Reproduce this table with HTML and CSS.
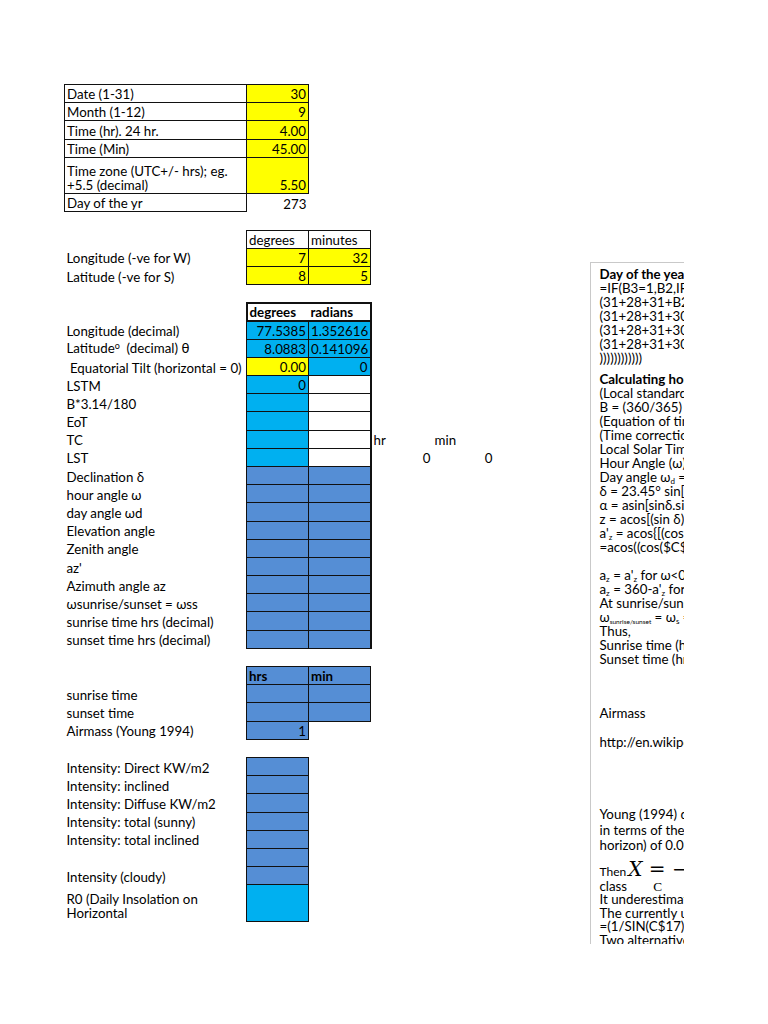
FILE: index.html
```html
<!DOCTYPE html>
<html lang="en">
<head>
<meta charset="utf-8">
<title>Solar calculator</title>
<link rel="stylesheet" href="styles.css">
</head>
<body>
<div class="page">
  <div class="sheet">
    <table class="grid">
      <colgroup><col class="ca"><col class="cn"><col class="cn"><col class="cn"><col class="cn"></colgroup>
      <tr><td class="bx">Date (1-31)</td><td class="bx y r">30</td><td></td><td></td><td></td></tr>
      <tr><td class="bx">Month (1-12)</td><td class="bx y r">9</td><td></td><td></td><td></td></tr>
      <tr><td class="bx">Time (hr). 24 hr.</td><td class="bx y r">4.00</td><td></td><td></td><td></td></tr>
      <tr><td class="bx">Time (Min)</td><td class="bx y r">45.00</td><td></td><td></td><td></td></tr>
      <tr class="tall"><td class="bx">Time zone (UTC+/- hrs); eg.<br>+5.5 (decimal)</td><td class="bx y r">5.50</td><td></td><td></td><td></td></tr>
      <tr><td class="bx">Day of the yr</td><td class="r">273</td><td></td><td></td><td></td></tr>
      <tr><td></td><td></td><td></td><td></td><td></td></tr>
      <tr><td></td><td class="bx">degrees</td><td class="bx">minutes</td><td></td><td></td></tr>
      <tr><td>Longitude (-ve for W)</td><td class="bx y r">7</td><td class="bx y r">32</td><td></td><td></td></tr>
      <tr><td>Latitude (-ve for S)</td><td class="bx y r">8</td><td class="bx y r">5</td><td></td><td></td></tr>
      <tr><td></td><td></td><td></td><td></td><td></td></tr>
      <tr><td></td><td class="hdl b">degrees</td><td class="hdr b">radians</td><td></td><td></td></tr>
      <tr><td>Longitude (decimal)</td><td class="bx lb r">77.5385</td><td class="bx lb r rr">1.352616</td><td></td><td></td></tr>
      <tr><td>Latitude<sup class="deg">o</sup>&nbsp; (decimal) <span class="theta">θ</span></td><td class="bx lb r">8.0883</td><td class="bx lb r rr">0.141096</td><td></td><td></td></tr>
      <tr><td>&nbsp;Equatorial Tilt (horizontal = 0)</td><td class="bx y r">0.00</td><td class="bx lb r rr">0</td><td></td><td></td></tr>
      <tr><td>LSTM</td><td class="bx lb r">0</td><td class="bx rr"></td><td></td><td></td></tr>
      <tr><td>B*3.14/180</td><td class="bx lb"></td><td class="bx rr"></td><td></td><td></td></tr>
      <tr><td>EoT</td><td class="bx lb"></td><td class="bx rr"></td><td></td><td></td></tr>
      <tr><td>TC</td><td class="bx lb"></td><td class="bx rr"></td><td>hr</td><td>min</td></tr>
      <tr><td>LST</td><td class="bx lb"></td><td class="bx rr"></td><td class="r">0</td><td class="r">0</td></tr>
      <tr><td>Declination δ</td><td class="bx mb"></td><td class="bx mb rr"></td><td></td><td></td></tr>
      <tr><td>hour angle ω</td><td class="bx mb"></td><td class="bx mb rr"></td><td></td><td></td></tr>
      <tr><td>day angle ωd</td><td class="bx mb"></td><td class="bx mb rr"></td><td></td><td></td></tr>
      <tr><td>Elevation angle</td><td class="bx mb"></td><td class="bx mb rr"></td><td></td><td></td></tr>
      <tr><td>Zenith angle</td><td class="bx mb"></td><td class="bx mb rr"></td><td></td><td></td></tr>
      <tr><td>az'</td><td class="bx mb"></td><td class="bx mb rr"></td><td></td><td></td></tr>
      <tr><td>Azimuth angle az</td><td class="bx mb"></td><td class="bx mb rr"></td><td></td><td></td></tr>
      <tr><td>ωsunrise/sunset = ωss</td><td class="bx mb"></td><td class="bx mb rr"></td><td></td><td></td></tr>
      <tr><td>sunrise time hrs (decimal)</td><td class="bx mb"></td><td class="bx mb rr"></td><td></td><td></td></tr>
      <tr><td>sunset time hrs (decimal)</td><td class="bx mb"></td><td class="bx mb rr"></td><td></td><td></td></tr>
      <tr><td></td><td></td><td></td><td></td><td></td></tr>
      <tr><td></td><td class="bx mb b">hrs</td><td class="bx mb b">min</td><td></td><td></td></tr>
      <tr><td>sunrise time</td><td class="bx mb"></td><td class="bx mb"></td><td></td><td></td></tr>
      <tr><td>sunset time</td><td class="bx mb"></td><td class="bx mb"></td><td></td><td></td></tr>
      <tr><td>Airmass (Young 1994)</td><td class="bx mb r">1</td><td></td><td></td><td></td></tr>
      <tr><td></td><td></td><td></td><td></td><td></td></tr>
      <tr><td>Intensity: Direct KW/m2</td><td class="bx mb"></td><td></td><td></td><td></td></tr>
      <tr><td>Intensity: inclined</td><td class="bx mb"></td><td></td><td></td><td></td></tr>
      <tr><td>Intensity: Diffuse KW/m2</td><td class="bx mb"></td><td></td><td></td><td></td></tr>
      <tr><td>Intensity: total (sunny)</td><td class="bx mb"></td><td></td><td></td><td></td></tr>
      <tr><td>Intensity: total inclined</td><td class="bx mb"></td><td></td><td></td><td></td></tr>
      <tr><td></td><td class="bx mb"></td><td></td><td></td><td></td></tr>
      <tr><td>Intensity (cloudy)</td><td class="bx mb"></td><td></td><td></td><td></td></tr>
      <tr class="tall"><td>R0 (Daily Insolation on<br>Horizontal</td><td class="bx lb"></td><td></td><td></td><td></td></tr>
    </table>
  </div>

  <div class="note">
    <div class="para">
      <div class="b">Day of the year</div>
      <div>=IF(B3=1,B2,IF(B3=2,31+B2,IF(B3=3,</div>
      <div>(31+28+31+B2),IF(B3=5,</div>
      <div>(31+28+31+30+B2),IF(B3=6,</div>
      <div>(31+28+31+30+31+B2),IF(B3=7,</div>
      <div>(31+28+31+30+31+30+B2),IF(B3=8,</div>
      <div>))))))))))))</div>
    </div>
    <div class="para p2">
      <div class="b">Calculating hour angle</div>
      <div>(Local standard time meridian) LSTM = 15&deg;.&Delta;T<sub>GMT</sub></div>
      <div>B = (360/365) (d - 81)</div>
      <div>(Equation of time) EoT = 9.87 sin(2B) - 7.53 cos(B) - 1.5 sin(B)</div>
      <div>(Time correction factor) TC = 4(Longitude - LSTM) + EoT</div>
      <div>Local Solar Time LST = LT + TC/60</div>
      <div>Hour Angle (&omega;) = 15&deg;(LST - 12)</div>
      <div>Day angle &omega;<sub>d</sub> = 2&pi;(d - 1)/365</div>
      <div>&delta; = 23.45&deg; sin[(360/365)(d - 81)]</div>
      <div>&alpha; = asin[sin&delta;.sin&phi; + cos&delta;.cos&phi;.cos&omega;]</div>
      <div>z = acos[(sin &delta;)(sin &phi;) + (cos &delta;)(cos &phi;)(cos &omega;)]</div>
      <div>a'<sub>z</sub> = acos{[(cos &phi;)(sin &delta;) - (cos &delta;)(sin &phi;)(cos &omega;)]/cos &alpha;}</div>
      <div>=acos((cos($C$15)*sin($B$22)</div>
    </div>
    <div class="para p3">
      <div>a<sub>z</sub> = a'<sub>z</sub> for &omega;&lt;0</div>
      <div>a<sub>z</sub> = 360-a'<sub>z</sub> for &omega;&gt;0</div>
      <div>At sunrise/sunset, &alpha; = 0</div>
      <div>&omega;<sub class="tiny">sunrise/sunset</sub> = &omega;<sub>s</sub> = acos(-tan&phi;.tan&delta;)</div>
      <div>Thus,</div>
      <div>Sunrise time (hrs) = 12 - &omega;<sub>s</sub>/15 - TC/60</div>
      <div>Sunset time (hrs) = 12 + &omega;<sub>s</sub>/15 - TC/60</div>
    </div>
    <div class="para p4">Airmass</div>
    <div class="para p5">http://en.wikipedia.org/wiki/Airmass</div>
    <div class="para p6">
      <div>Young (1994) developed the formula</div>
      <div>in terms of the true zenith angle</div>
      <div>horizon) of 0.0</div>
    </div>
    <div class="para p7">
      <div class="mathline"><span class="then">Then</span><span class="math"><i>X</i> = &minus;</span></div>
      <div>class<span class="serif">C</span></div>
      <div>It underestimates airmass at the horizon</div>
      <div>The currently used formula is</div>
      <div>=(1/SIN(C$17))</div>
      <div>Two alternative formulas are</div>
    </div>
  </div>
</div>
</body>
</html>
```

FILE: styles.css
```css
html, body {
  margin: 0;
  padding: 0;
  background: #ffffff;
}

body {
  font-family: Lato, "Liberation Sans", sans-serif;
  font-size: 13.3px;
  color: #000000;
}

.page {
  display: flex;
  align-items: flex-start;
  width: 768px;
  height: 1024px;
}

.sheet {
  padding: 84px 0 0 64px;
  flex: none;
}

.grid {
  border-collapse: collapse;
  table-layout: fixed;
  width: 430px;
}

.grid col.ca { width: 182px; }
.grid col.cn { width: 62px; }

.grid tr { height: 18.2px; }
.grid tr.tall { height: 36.4px; }

.grid td {
  padding: 0 2px 1px 2px;
  vertical-align: bottom;
  line-height: 14px;
  white-space: nowrap;
  overflow: hidden;
}

.bx { border: 1px solid #111111; }
.y { background: #ffff00; }
.lb { background: #00b0f0; }
.mb { background: #558ed5; }
.r { text-align: right; }
.b { font-weight: bold; }
.rr { border-right: 2px solid #111111; }

.hdl {
  border-top: 2px solid #111111;
  border-bottom: 2px solid #111111;
  border-left: 2px solid #111111;
}
.hdr {
  border-top: 2px solid #111111;
  border-bottom: 2px solid #111111;
  border-right: 2px solid #111111;
}

.deg {
  font-size: 9px;
  vertical-align: 4px;
  line-height: 0;
}
.theta {
  font-family: "DejaVu Sans", sans-serif;
  font-size: 13px;
}

/* floating text box */
.note {
  flex: none;
  box-sizing: border-box;
  margin: 262px 0 0 94px;
  width: 94px;
  height: 682px;
  border-left: 1px solid #c9c9c9;
  border-top: 1px solid #c9c9c9;
  padding: 4px 0 0 9px;
  overflow: hidden;
  white-space: nowrap;
  line-height: 14px;
}

.note sub {
  font-size: 8px;
  line-height: 0;
  vertical-align: -2px;
}
.note sub.tiny { font-size: 6.5px; }

.p2 { margin-top: 7px; }
.p3 { margin-top: 14px; }
.p4 { margin-top: 40px; }
.p5 { margin-top: 15px; }
.p6 { margin-top: 58px; line-height: 15.5px; }
.p7 { line-height: 13.5px; }

.mathline {
  height: 26px;
  display: flex;
  align-items: baseline;
  padding-top: 6px;
  box-sizing: border-box;
}
.then { font-size: 12px; }
.math {
  font-family: "DejaVu Serif", "Liberation Serif", serif;
  font-size: 20px;
  margin-left: 2px;
  line-height: 18px;
}
.math i { font-style: italic; }

.serif {
  font-family: "Liberation Serif", serif;
  margin-left: 26px;
}
```
